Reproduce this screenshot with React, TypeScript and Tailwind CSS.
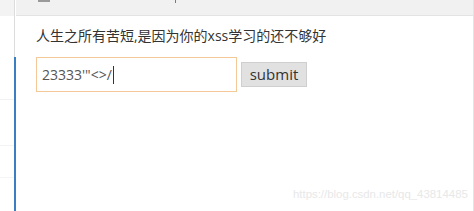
import React from "react";

export default function App() {
  return (
    <div
      className="relative w-[474px] h-[211px] overflow-hidden bg-white flex"
      style={{ fontFamily: '"Open Sans", "Noto Sans CJK SC", sans-serif' }}
    >
      {/* left gutter */}
      <div className="w-[14px] flex flex-col shrink-0">
        <div className="h-[16px] bg-[#f3f3f3]" />
        <div className="h-[84px] border-b border-[#f1f1f1]" />
        <div className="h-[46px] border-b border-[#f3f3f3]" />
        <div className="h-[32px] border-b border-[#f5f5f5]" />
      </div>
      {/* vertical line */}
      <div className="w-[2px] flex flex-col shrink-0">
        <div className="h-[57px] w-[1px] bg-[#dcdcdc]" />
        <div className="flex-1 w-[2px] bg-[#3a7fc1]" />
      </div>
      {/* content */}
      <div className="flex-1 flex flex-col border-r border-[#e4e4e4]">
        <div className="h-[16px] bg-[#f1f1f1] border-b border-[#e3e3e3] relative">
          <div className="absolute left-[22px] top-0 w-[12px] h-[2px] bg-[#9a9a9a]" />
          <div className="absolute left-[159px] top-0 w-[1px] h-[3px] bg-[#7a7a7a]" />
        </div>
        <div className="pl-[20px] pt-[10px] text-[14px] leading-[20px] text-[#333]">
          人生之所有苦短,是因为你的xss学习的还不够好
        </div>
        <div className="pl-[20px] mt-[11px] flex items-center">
          <div className="w-[201px] h-[35px] border border-[#f5c897] flex items-center pl-[5px] text-[14px] text-[#555]">
            <span>23333'"&lt;&gt;/</span>
            <span className="inline-block w-[1px] h-[18px] bg-[#333] ml-[1px]" />
          </div>
          <div className="ml-[4px] w-[66px] h-[25px] bg-[#e1e1e1] border border-[#cfcfcf] flex items-center justify-center text-[15px] text-[#333]">
            submit
          </div>
        </div>
      </div>
      <div
        className="absolute left-[293px] top-[187px] text-[11.4px] leading-[15px] text-[#e8e8e8] whitespace-nowrap"
        style={{ fontFamily: '"Liberation Sans", Arial, sans-serif' }}
      >
        https://blog.csdn.net/qq_43814485
      </div>
    </div>
  );
}
